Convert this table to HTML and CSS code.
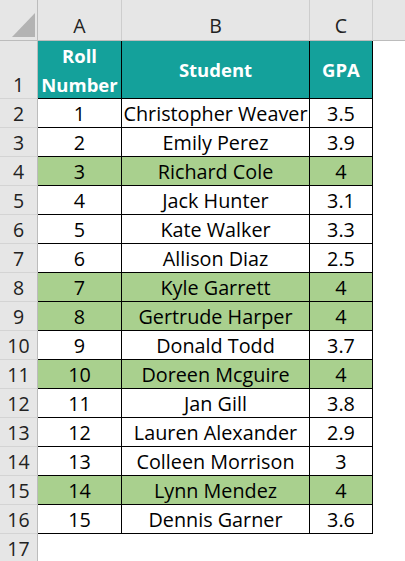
FILE: index.html
```html
<!DOCTYPE html>
<html>
<head>
<meta charset="utf-8">
<link rel="stylesheet" href="styles.css">
</head>
<body>
<div class="sheet">
  <div class="corner"><svg class="tri" width="23" height="24" viewBox="0 0 23 24"><polygon points="0,24 23,24 23,0" fill="#b3b3b3"/></svg></div>
  <div class="colhead">A</div>
  <div class="colhead">B</div>
  <div class="colhead">C</div>
  <div class="colhead fill"></div>

  <div class="rowhead">1</div>
  <div class="cell th"><span>Roll<br>Number</span></div>
  <div class="cell th">Student</div>
  <div class="cell th">GPA</div>
  <div class="blank"></div>

  <div class="rowhead">2</div><div class="cell">1</div><div class="cell">Christopher Weaver</div><div class="cell">3.5</div><div class="blank"></div>
  <div class="rowhead">3</div><div class="cell">2</div><div class="cell">Emily Perez</div><div class="cell">3.9</div><div class="blank"></div>
  <div class="rowhead">4</div><div class="cell hl">3</div><div class="cell hl">Richard Cole</div><div class="cell hl">4</div><div class="blank"></div>
  <div class="rowhead">5</div><div class="cell">4</div><div class="cell">Jack Hunter</div><div class="cell">3.1</div><div class="blank"></div>
  <div class="rowhead">6</div><div class="cell">5</div><div class="cell">Kate Walker</div><div class="cell">3.3</div><div class="blank"></div>
  <div class="rowhead">7</div><div class="cell">6</div><div class="cell">Allison Diaz</div><div class="cell">2.5</div><div class="blank"></div>
  <div class="rowhead">8</div><div class="cell hl">7</div><div class="cell hl">Kyle Garrett</div><div class="cell hl">4</div><div class="blank"></div>
  <div class="rowhead">9</div><div class="cell hl">8</div><div class="cell hl">Gertrude Harper</div><div class="cell hl">4</div><div class="blank"></div>
  <div class="rowhead">10</div><div class="cell">9</div><div class="cell">Donald Todd</div><div class="cell">3.7</div><div class="blank"></div>
  <div class="rowhead">11</div><div class="cell hl">10</div><div class="cell hl">Doreen Mcguire</div><div class="cell hl">4</div><div class="blank"></div>
  <div class="rowhead">12</div><div class="cell">11</div><div class="cell">Jan Gill</div><div class="cell">3.8</div><div class="blank"></div>
  <div class="rowhead">13</div><div class="cell">12</div><div class="cell">Lauren Alexander</div><div class="cell">2.9</div><div class="blank"></div>
  <div class="rowhead">14</div><div class="cell">13</div><div class="cell">Colleen Morrison</div><div class="cell">3</div><div class="blank"></div>
  <div class="rowhead">15</div><div class="cell hl">14</div><div class="cell hl">Lynn Mendez</div><div class="cell hl">4</div><div class="blank"></div>
  <div class="rowhead">16</div><div class="cell">15</div><div class="cell">Dennis Garner</div><div class="cell">3.6</div><div class="blank"></div>
  <div class="rowhead">17</div><div class="blank"></div><div class="blank"></div><div class="blank"></div><div class="blank"></div>
</div>
</body>
</html>
```
FILE: styles.css
```css
* { box-sizing: border-box; }
html, body { margin: 0; padding: 0; background: #fff; }
body { font-family: "Open Sans", Lato, sans-serif; color: #000; }

.sheet {
  display: grid;
  grid-template-columns: 38px 84px 188px 63px 1fr;
  grid-template-rows: 41px 58px repeat(16, 29px);
  width: 405px;
  height: 561px;
  overflow: hidden;
}

.corner {
  background: #e6e6e6;
  border-right: 1px solid #bcbcbc;
  border-bottom: 1px solid #bcbcbc;
  display: flex;
  align-items: flex-end;
  justify-content: flex-end;
  padding: 0 2px 3px 0;
}
.tri { display: block; }

.colhead {
  background: #e6e6e6;
  border-right: 1px solid #cdcdcd;
  border-bottom: 1px solid #bcbcbc;
  display: flex;
  align-items: flex-end;
  justify-content: center;
  padding-bottom: 3px;
  font-size: 19.5px;
  line-height: 22px;
  color: #222;
}
.colhead.fill { border-right: none; }

.rowhead {
  background: #e6e6e6;
  border-right: 1px solid #bcbcbc;
  border-bottom: 1px solid #d4d4d4;
  display: flex;
  align-items: flex-end;
  justify-content: center;
  padding-bottom: 2px;
  font-size: 19.5px;
  line-height: 22px;
  color: #222;
}

.cell {
  border-right: 1px solid #000;
  border-bottom: 1px solid #000;
  display: flex;
  align-items: flex-end;
  justify-content: center;
  padding-bottom: 2px;
  font-size: 19.8px;
  line-height: 22px;
  white-space: nowrap;
}
.cell.th {
  background: #14a19b;
  color: #fff;
  font-weight: 700;
  font-size: 18.5px;
  align-items: center;
  padding-bottom: 0;
  text-align: center;
  line-height: 29px;
}
.cell.hl { background: #a9d08e; }
.blank { background: #fff; }
```
